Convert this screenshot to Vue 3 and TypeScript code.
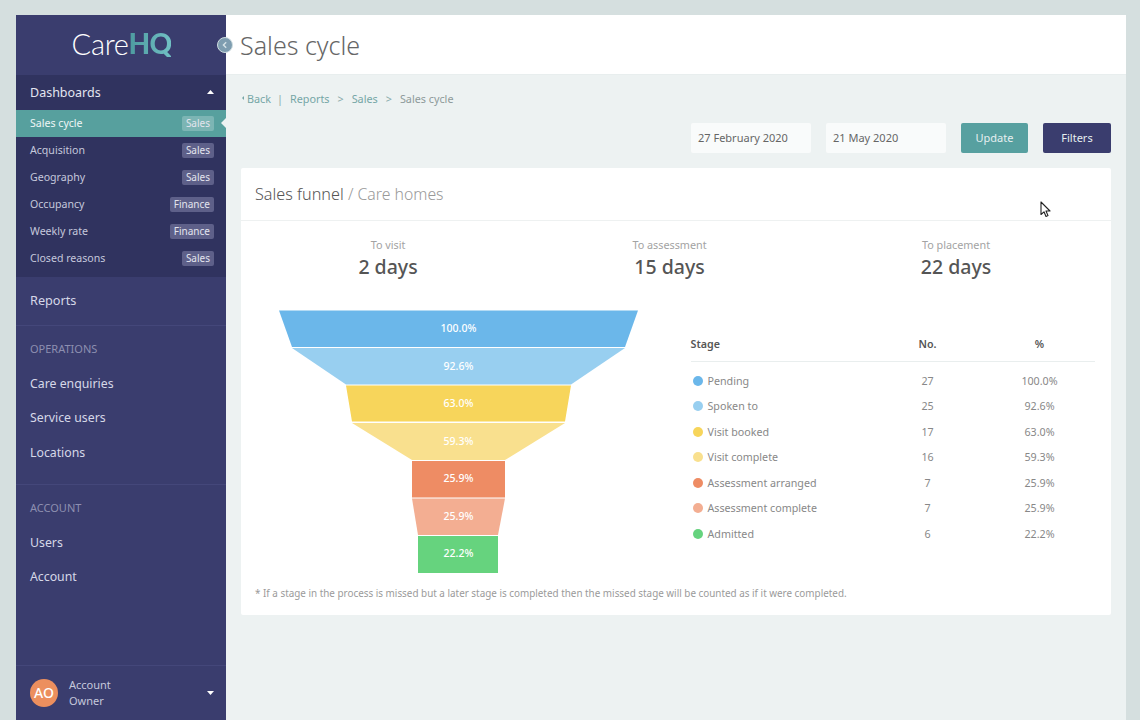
<script setup lang="ts">
const dashboards = [
  { name: 'Sales cycle', tag: 'Sales', active: true },
  { name: 'Acquisition', tag: 'Sales' },
  { name: 'Geography', tag: 'Sales' },
  { name: 'Occupancy', tag: 'Finance' },
  { name: 'Weekly rate', tag: 'Finance' },
  { name: 'Closed reasons', tag: 'Sales' },
]
const stats = [
  { label: 'To visit', value: '2 days' },
  { label: 'To assessment', value: '15 days' },
  { label: 'To placement', value: '22 days' },
]
const stages = [
  { name: 'Pending', no: 27, pct: '100.0%', color: '#6bb7ea', pts: '0,0.5 359,0.5 346,37 13,37', y: 22 },
  { name: 'Spoken to', no: 25, pct: '92.6%', color: '#98cff0', pts: '13,38 346,38 292,74.5 67,74.5', y: 59.5 },
  { name: 'Visit booked', no: 17, pct: '63.0%', color: '#f7d55b', pts: '67,75.5 292,75.5 286,111.5 73,111.5', y: 97 },
  { name: 'Visit complete', no: 16, pct: '59.3%', color: '#f9e08e', pts: '73,113 286,113 226,150 133,150', y: 134.5 },
  { name: 'Assessment arranged', no: 7, pct: '25.9%', color: '#ee8c64', pts: '133,151 226,151 226,187.5 133,187.5', y: 172 },
  { name: 'Assessment complete', no: 7, pct: '25.9%', color: '#f3ae92', pts: '133,188.5 226,188.5 219,225 139,225', y: 209.5 },
  { name: 'Admitted', no: 6, pct: '22.2%', color: '#66d37e', pts: '139,226 219,226 219,263 139,263', y: 247 },
]
</script>

<template>
  <div class="window">
    <aside class="sidebar">
      <div class="logo"><span class="care">Care</span><span class="hq">HQ</span></div>
      <section class="dash">
        <div class="dash-head">
          <span>Dashboards</span>
          <svg width="7" height="4" viewBox="0 0 7 4"><path d="M3.5 0L7 4H0z" fill="#fff" /></svg>
        </div>
        <div v-for="d in dashboards" :key="d.name" class="dash-row" :class="{ active: d.active }">
          <span class="dash-name">{{ d.name }}</span>
          <span class="tag">{{ d.tag }}</span>
        </div>
      </section>
      <nav class="block reports"><a>Reports</a></nav>
      <nav class="block">
        <h4>OPERATIONS</h4>
        <a>Care enquiries</a>
        <a>Service users</a>
        <a>Locations</a>
      </nav>
      <nav class="block last">
        <h4>ACCOUNT</h4>
        <a>Users</a>
        <a>Account</a>
      </nav>
      <footer class="user">
        <div class="avatar">AO</div>
        <div class="who"><span>Account</span><span>Owner</span></div>
        <svg width="7" height="4" viewBox="0 0 7 4"><path d="M0 0H7L3.5 4z" fill="#fff" /></svg>
      </footer>
    </aside>

    <main class="main">
      <header class="top"><h1>Sales cycle</h1></header>
      <div class="toggle">
        <svg width="8" height="8" viewBox="0 0 8 8"><path d="M5.2 1.2L2.4 4l2.8 2.8" fill="none" stroke="#d5e2e6" stroke-width="1.4" /></svg>
      </div>
      <div class="content">
        <div class="crumbs">
          <span class="back"><i></i>Back</span><span class="bar">|</span><span>Reports</span>
          <span class="sep">&gt;</span><span>Sales</span><span class="sep">&gt;</span><span class="here">Sales cycle</span>
        </div>
        <div class="filters">
          <div class="date">27 February 2020</div>
          <div class="date">21 May 2020</div>
          <button class="btn update">Update</button>
          <button class="btn dark">Filters</button>
        </div>
        <section class="card">
          <h2 class="card-title">Sales funnel <span>/ Care homes</span></h2>
          <div class="stats">
            <div v-for="s in stats" :key="s.label" class="stat">
              <div class="stat-label">{{ s.label }}</div>
              <div class="stat-value">{{ s.value }}</div>
            </div>
          </div>
          <div class="body">
            <svg class="funnel" width="360" height="264" viewBox="0 0 360 264">
              <g v-for="s in stages" :key="s.name">
                <polygon :points="s.pts" :fill="s.color" />
                <text :x="179.5" :y="s.y" text-anchor="middle">{{ s.pct }}</text>
              </g>
            </svg>
            <div class="table">
              <div class="thead">
                <span>Stage</span><span class="c">No.</span><span class="c">%</span>
              </div>
              <div v-for="s in stages" :key="s.name" class="row">
                <span class="stage"><i :style="{ background: s.color }"></i>{{ s.name }}</span>
                <span class="c">{{ s.no }}</span>
                <span class="c">{{ s.pct }}</span>
              </div>
            </div>
          </div>
          <p class="note">* If a stage in the process is missed but a later stage is completed then the missed stage will be counted as if it were completed.</p>
        </section>
      </div>
    </main>
    <svg class="cursor" width="12" height="17" viewBox="0 0 12 17">
      <path d="M1 1V13.5L4 10.8L6 15.5L8 14.6L6 10H10z" fill="#fff" stroke="#222" stroke-width="1.1" stroke-linejoin="round" />
    </svg>
  </div>
</template>

<style>
html, body { margin: 0; background: #d5dfdf; }
</style>

<style scoped>
* { box-sizing: border-box; }
.window {
  position: relative;
  display: flex;
  width: 1110px;
  height: 705px;
  margin: 15px 0 0 16px;
  overflow: hidden;
  font-family: "Noto Sans", "Open Sans", sans-serif;
  color: #555;
  background: #edf2f2;
}
.sidebar {
  width: 210px;
  flex: none;
  display: flex;
  flex-direction: column;
  background: #3a3d6e;
  color: #d6d8e8;
}
.logo {
  height: 60px;
  display: flex;
  align-items: center;
  justify-content: center;
  padding: 0 0 4px 1px;
  font-family: Lato, sans-serif;
  font-size: 29px;
  line-height: 1;
  color: #fff;
}
.care { font-weight: 300; letter-spacing: -0.3px; }
.hq {
  font-weight: 900;
  letter-spacing: -0.8px;
  font-size: 28px;
  color: transparent;
  background: linear-gradient(90deg, #4d9ba0, #71c0c4);
  -webkit-background-clip: text;
  background-clip: text;
}
.dash { background: #30335f; height: 202px; }
.dash-head {
  height: 35px;
  padding: 0 12px 1px 14px;
  display: flex;
  align-items: center;
  justify-content: space-between;
  font-size: 12.5px;
  color: #e3e5f0;
}
.dash-row {
  position: relative;
  height: 27px;
  padding: 0 12px 0 14px;
  display: flex;
  align-items: center;
  justify-content: space-between;
  font-size: 10.6px;
  color: #c5c8dc;
}
.dash-name { padding-bottom: 2px; }
.dash-row.active { background: #57a09e; color: #eef6f6; }
.dash-row.active::after {
  content: "";
  position: absolute;
  right: 0;
  top: 8px;
  border: 5.5px solid transparent;
  border-right-color: #edf2f2;
  border-left-width: 0;
}
.tag {
  padding: 0 4px;
  height: 15px;
  line-height: 15px;
  border-radius: 2px;
  font-size: 10px;
  background: #5e6089;
  color: #e3e4ee;
}
.active .tag { background: #7cb5b4; }
.block {
  display: flex;
  flex-direction: column;
  padding: 0 14px;
  border-bottom: 1px solid #44477a;
  height: 159px;
}
.block a { font-size: 12.3px; height: 34.4px; line-height: 34px; color: #d6d8e8; }
.block h4 {
  margin: 0;
  height: 41px;
  padding-top: 16px;
  line-height: 14px;
  font-size: 11px;
  font-weight: 400;
  color: #8d8fb0;
}
.reports { height: 49px; justify-content: center; padding-bottom: 2px; }
.reports a { font-size: 12.7px; }
.last { flex: 1; }
.user {
  height: 54px;
  flex: none;
  padding: 0 12px 0 14px;
  display: flex;
  align-items: center;
}
.avatar {
  width: 28px;
  height: 28px;
  border-radius: 50%;
  background: #ec8f5e;
  color: #fff;
  font-size: 14px;
  font-weight: 500;
  text-align: center;
  line-height: 28px;
}
.who {
  flex: 1;
  margin-left: 11px;
  display: flex;
  flex-direction: column;
  font-size: 11px;
  line-height: 16.5px;
  color: #c5c8dc;
}
.main { flex: 1; min-width: 0; display: flex; flex-direction: column; position: relative; }
.top {
  height: 60px;
  flex: none;
  background: #fff;
  padding-left: 14px;
  display: flex;
  align-items: center;
  border-bottom: 1px solid #e8eeee;
}
.top h1 { margin: 0; font-size: 25px; font-weight: 300; color: #666; }
.toggle {
  position: absolute;
  left: -9px;
  top: 22px;
  width: 16px;
  height: 16px;
  border-radius: 50%;
  background: #7e9db0;
  border: 1.5px solid #cfdde0;
  display: flex;
  align-items: center;
  justify-content: center;
}
.content { flex: 1; padding: 0 15px; }
.crumbs {
  display: flex;
  align-items: center;
  height: 46px;
  font-size: 10.8px;
  color: #75a6a6;
}
.back { display: flex; align-items: center; }
.back i {
  width: 0;
  height: 0;
  margin: 0 3px 0 1px;
  border: 2.5px solid transparent;
  border-right-color: #75a6a6;
  border-left-width: 0;
}
.sep { margin: 0 8px; color: #8aa; }
.bar { margin: 0 7px 0 6px; color: #8aa; }
.here { color: #8d9a9a; }
.filters {
  display: flex;
  justify-content: flex-end;
  align-items: center;
  gap: 15px;
  height: 30px;
  margin-top: 2px;
}
.date {
  width: 120px;
  height: 30px;
  line-height: 30px;
  padding-left: 7px;
  background: #f9fbfb;
  border-radius: 2px;
  font-size: 11px;
  color: #666;
}
.btn {
  width: 68px;
  height: 30px;
  border: 0;
  border-radius: 2px;
  padding: 0 0 2px;
  font: inherit;
  font-size: 11px;
  color: #e6eff0;
}
.update { background: #57a0a0; width: 67px; }
.dark { background: #3a3d6e; }
.card { margin-top: 15px; height: 447px; background: #fff; border-radius: 2px; }
.card-title {
  margin: 0;
  height: 53px;
  padding-left: 14px;
  line-height: 52px;
  font-size: 16.2px;
  font-weight: 300;
  color: #555;
  border-bottom: 1px solid #eef1f1;
}
.card-title span { color: #999; font-size: 15.8px; }
.stats {
  display: grid;
  grid-template-columns: 282px 281px 292px;
  padding: 17px 0 0 6px;
  height: 89px;
  text-align: center;
}
.stat-label { font-size: 10.8px; line-height: 14px; color: #a3a3a3; }
.stat-value { font-size: 19.5px; line-height: 30px; font-weight: 500; color: #555; }
.body { display: flex; height: 265px; padding-left: 37.5px; }
.funnel { flex: none; }
.funnel text { font-size: 10.5px; fill: #fff; font-weight: 500; dominant-baseline: auto; }
.table { width: 404px; margin-left: 52px; font-size: 10.7px; color: #888; }
.thead, .row { display: grid; grid-template-columns: 180px 114px 110px; align-items: center; }
.thead {
  height: 52px;
  padding-top: 17px;
  margin-bottom: 6px;
  border-bottom: 1px solid #e9eeee;
  font-weight: 600;
  color: #555;
}
.row { height: 25.5px; }
.c { text-align: center; }
.stage { display: flex; align-items: center; white-space: nowrap; }
.stage i { width: 10px; height: 10px; margin: 0 5px 0 2px; border-radius: 50%; }
.note { margin: 11px 0 0 14px; font-size: 9.9px; line-height: 14px; color: #9a9a9a; }
.cursor { position: absolute; left: 1024px; top: 186px; }
</style>
